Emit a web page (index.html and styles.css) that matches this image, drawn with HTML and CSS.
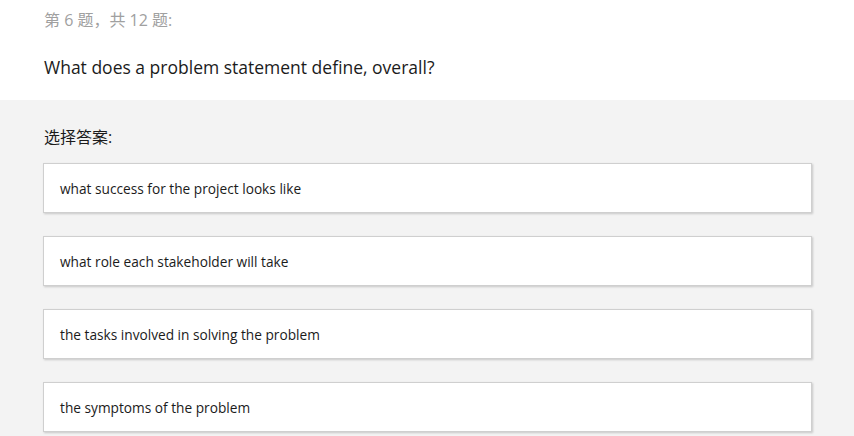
FILE: index.html
```html
<!DOCTYPE html>
<html lang="zh">
<head>
<meta charset="utf-8">
<link rel="stylesheet" href="styles.css">
</head>
<body>
<header class="top">
  <div class="counter">第 6 题，共 12 题:</div>
  <h1 class="question">What does a problem statement define, overall?</h1>
</header>
<main class="answers">
  <div class="label">选择答案:</div>
  <ul class="options">
    <li class="option">what success for the project looks like</li>
    <li class="option">what role each stakeholder will take</li>
    <li class="option">the tasks involved in solving the problem</li>
    <li class="option">the symptoms of the problem</li>
  </ul>
</main>
</body>
</html>
```
FILE: styles.css
```css
html, body {
  margin: 0;
  padding: 0;
}
body {
  font-family: "Open Sans", "Noto Sans CJK SC", sans-serif;
  color: #1a1a1a;
  background: #f3f3f3;
  width: 854px;
  height: 436px;
  overflow: hidden;
}
.top {
  background: #fff;
  height: 100px;
  padding: 0 0 0 44px;
  box-sizing: border-box;
}
.counter {
  font-size: 16px;
  color: #a0a0a0;
  line-height: 20px;
  padding-top: 10px;
}
.question {
  margin: 0;
  padding-top: 25px;
  font-size: 17.5px;
  font-weight: normal;
  line-height: 24px;
  color: #1b1b1b;
}
.answers {
  padding: 26px 42px 0 43px;
}
.label {
  font-size: 16px;
  line-height: 22px;
  color: #1b1b1b;
  padding-left: 1px;
}
.options {
  list-style: none;
  margin: 15px 0 0;
  padding: 0;
  display: flex;
  flex-direction: column;
  gap: 23px;
}
.option {
  height: 50px;
  box-sizing: border-box;
  background: #fff;
  border: 1px solid #cfcfcf;
  box-shadow: 1px 1px 2px rgba(0,0,0,0.18);
  display: flex;
  align-items: center;
  padding-left: 16px;
  padding-top: 1px;
  font-size: 13.7px;
  color: #1b1b1b;
}
```
